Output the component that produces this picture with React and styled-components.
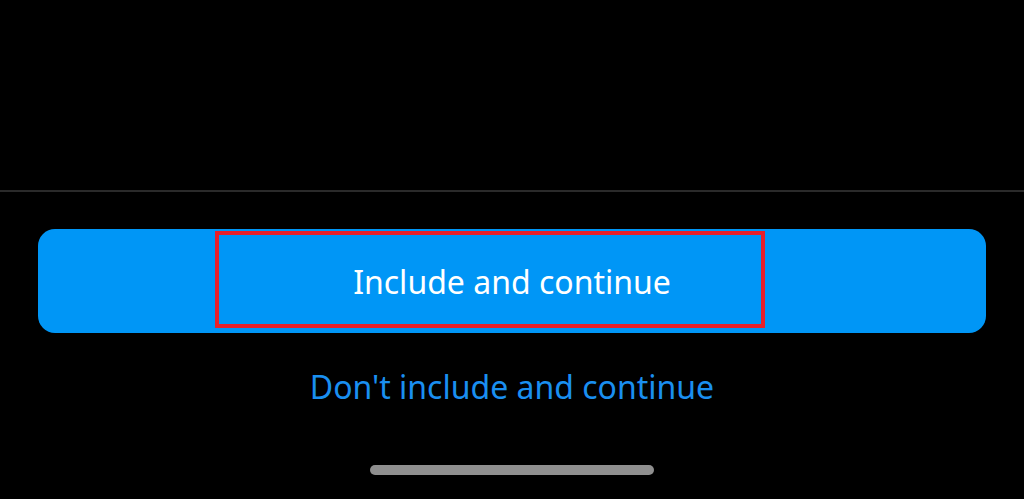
import React from 'react';
import styled, { createGlobalStyle } from 'styled-components';

const GlobalStyle = createGlobalStyle`
  html, body {
    margin: 0;
    padding: 0;
    background: #000;
  }
  body {
    font-family: "Noto Sans", "Open Sans", sans-serif;
  }
`;

const Screen = styled.div`
  width: 1024px;
  height: 499px;
  background: #000;
  display: flex;
  flex-direction: column;
  overflow: hidden;
`;

const Content = styled.div`
  height: 190px;
  flex-shrink: 0;
`;

const Divider = styled.div`
  height: 2px;
  background: #2a2a2a;
  flex-shrink: 0;
`;

const Actions = styled.div`
  display: flex;
  flex-direction: column;
  align-items: center;
  padding: 37px 38px 0;
`;

const PrimaryButton = styled.button`
  position: relative;
  width: 100%;
  height: 104px;
  border: none;
  border-radius: 17px;
  background: #0096f6;
  color: #fff;
  font-family: "Noto Sans", sans-serif;
  font-size: 32px;
  font-weight: 400;
  display: flex;
  align-items: center;
  justify-content: center;
  padding: 0;
  cursor: pointer;
`;

const Highlight = styled.span`
  position: absolute;
  left: 177px;
  top: 2px;
  width: 550px;
  height: 97px;
  border: 4px solid #e8202a;
  box-sizing: border-box;
  pointer-events: none;
`;

const LinkButton = styled.button`
  margin-top: 32px;
  border: none;
  background: none;
  color: #1a8ff0;
  font-family: "Noto Sans", sans-serif;
  font-size: 32px;
  font-weight: 400;
  padding: 0;
  cursor: pointer;
`;

const HomeIndicator = styled.div`
  margin-top: auto;
  margin-bottom: 24px;
  width: 284px;
  height: 10px;
  border-radius: 5px;
  background: #8f8f8f;
  align-self: center;
  flex-shrink: 0;
`;

export default function App() {
  return (
    <Screen>
      <GlobalStyle />
      <Content />
      <Divider />
      <Actions>
        <PrimaryButton>
          Include and continue
          <Highlight />
        </PrimaryButton>
        <LinkButton>Don't include and continue</LinkButton>
      </Actions>
      <HomeIndicator />
    </Screen>
  );
}
